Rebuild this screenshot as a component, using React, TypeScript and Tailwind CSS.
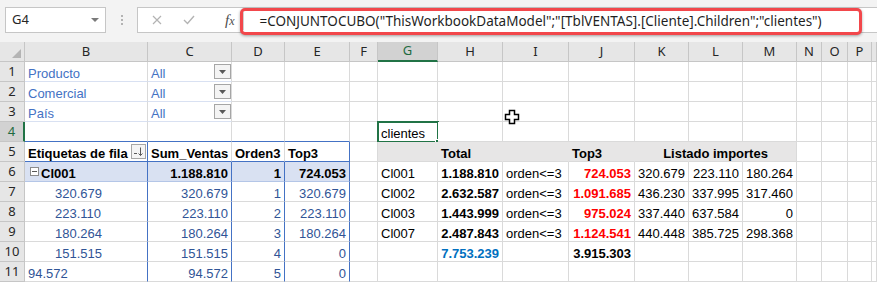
import React from 'react'

const COLS = ['B', 'C', 'D', 'E', 'F', 'G', 'H', 'I', 'J', 'K', 'L', 'M', 'N', 'O', 'P', 'Q']
const ROWS = [1, 2, 3, 4, 5, 6, 7, 8, 9, 10, 11]

const FILTER = 'pl-[3px] text-[#4472c4]'
const HEAD = 'pl-[3px] font-bold'
const NUM = 'justify-end pr-[3px]'
const NUMB = 'justify-end pr-[3px] font-bold'
const PVAL = 'justify-end pr-[3px] text-[#305496]'
const RED = 'justify-end pr-[3px] font-bold text-[#ff0000]'
const TXT = 'pl-[3px]'

type Cell = { v?: React.ReactNode; cls?: string }

function DropBtn() {
  return (
    <span className="ml-auto mb-[1px] flex h-[15px] w-[17px] items-center justify-center border border-[#a6a6a6] bg-[#f4f4f4]">
      <svg width="7" height="4" viewBox="0 0 7 4"><path d="M0 0h7L3.5 4z" fill="#595959" /></svg>
    </span>
  )
}

function SortBtn() {
  return (
    <span className="ml-auto mb-[1px] mr-[1px] flex h-[15px] w-[15px] items-center justify-center border border-[#a6a6a6] bg-[#f4f4f4]">
      <svg width="11" height="11" viewBox="0 0 11 11" fill="none" stroke="#595959" strokeWidth="1">
        <path d="M1 7.5h3" />
        <path d="M7.5 1.5v8M5.5 7.5l2 2 2-2" />
      </svg>
    </span>
  )
}

const DATA: Record<string, Cell> = {
  B1: { v: 'Producto', cls: FILTER },
  C1: { v: <><span>All</span><DropBtn /></>, cls: FILTER },
  B2: { v: 'Comercial', cls: FILTER },
  C2: { v: <><span>All</span><DropBtn /></>, cls: FILTER },
  B3: { v: 'País', cls: FILTER },
  C3: { v: <><span>All</span><DropBtn /></>, cls: FILTER },
  G4: { v: 'clientes', cls: TXT },
  B5: { v: <><span>Etiquetas de fila</span><SortBtn /></>, cls: HEAD },
  C5: { v: 'Sum_Ventas', cls: HEAD },
  D5: { v: 'Orden3', cls: HEAD },
  E5: { v: 'Top3', cls: HEAD },
  H5: { v: 'Total', cls: HEAD },
  J5: { v: 'Top3', cls: HEAD },
  L5: { v: 'Listado importes', cls: 'z-10 justify-center font-bold' },
  B6: {
    v: (
      <>
        <span className="mb-[4px] mr-[2px] flex h-[9px] w-[9px] items-center justify-center border border-[#8c8c8c] bg-white">
          <span className="h-px w-[5px] bg-[#595959]" />
        </span>
        <span>Cl001</span>
      </>
    ),
    cls: 'pl-[5px] font-bold',
  },
  C6: { v: '1.188.810', cls: NUMB },
  D6: { v: '1', cls: NUMB },
  E6: { v: '724.053', cls: NUMB },
  B7: { v: '320.679', cls: 'pl-[30px] text-[#305496]' },
  C7: { v: '320.679', cls: PVAL },
  D7: { v: '1', cls: PVAL },
  E7: { v: '320.679', cls: PVAL },
  B8: { v: '223.110', cls: 'pl-[30px] text-[#305496]' },
  C8: { v: '223.110', cls: PVAL },
  D8: { v: '2', cls: PVAL },
  E8: { v: '223.110', cls: PVAL },
  B9: { v: '180.264', cls: 'pl-[30px] text-[#305496]' },
  C9: { v: '180.264', cls: PVAL },
  D9: { v: '3', cls: PVAL },
  E9: { v: '180.264', cls: PVAL },
  B10: { v: '151.515', cls: 'pl-[30px] text-[#305496]' },
  C10: { v: '151.515', cls: PVAL },
  D10: { v: '4', cls: PVAL },
  E10: { v: '0', cls: PVAL },
  B11: { v: '94.572', cls: 'pl-[3px] text-[#305496]' },
  C11: { v: '94.572', cls: PVAL },
  D11: { v: '5', cls: PVAL },
  E11: { v: '0', cls: PVAL },
  G6: { v: 'Cl001', cls: TXT },
  H6: { v: '1.188.810', cls: NUMB },
  I6: { v: 'orden<=3', cls: TXT },
  J6: { v: '724.053', cls: RED },
  K6: { v: '320.679', cls: NUM },
  L6: { v: '223.110', cls: NUM },
  M6: { v: '180.264', cls: NUM },
  G7: { v: 'Cl002', cls: TXT },
  H7: { v: '2.632.587', cls: NUMB },
  I7: { v: 'orden<=3', cls: TXT },
  J7: { v: '1.091.685', cls: RED },
  K7: { v: '436.230', cls: NUM },
  L7: { v: '337.995', cls: NUM },
  M7: { v: '317.460', cls: NUM },
  G8: { v: 'Cl003', cls: TXT },
  H8: { v: '1.443.999', cls: NUMB },
  I8: { v: 'orden<=3', cls: TXT },
  J8: { v: '975.024', cls: RED },
  K8: { v: '337.440', cls: NUM },
  L8: { v: '637.584', cls: NUM },
  M8: { v: '0', cls: NUM },
  G9: { v: 'Cl007', cls: TXT },
  H9: { v: '2.487.843', cls: NUMB },
  I9: { v: 'orden<=3', cls: TXT },
  J9: { v: '1.124.541', cls: RED },
  K9: { v: '440.448', cls: NUM },
  L9: { v: '385.725', cls: NUM },
  M9: { v: '298.368', cls: NUM },
  H10: { v: '7.753.239', cls: 'justify-end pr-[3px] font-bold text-[#0070c0]' },
  J10: { v: '3.915.303', cls: NUMB },
}

// border / fill overrides for the pivot table and the cube formula block
const RIGHT: Record<string, string> = {}
const BOTTOM: Record<string, string> = {}
const BG: Record<string, string> = {}
for (const r of ROWS) {
  if (r >= 5) {
    RIGHT['B' + r] = 'border-r-[#4472c4]'
    RIGHT['E' + r] = 'border-r-[#4472c4]'
  }
  if (r >= 6) {
    RIGHT['C' + r] = 'border-r-[#4472c4]'
    RIGHT['D' + r] = 'border-r-[#4472c4]'
  }
}
for (const c of ['B', 'C', 'D', 'E']) {
  BOTTOM[c + 4] = 'border-b-[#4472c4]'
  BOTTOM[c + 5] = 'border-b-[#4472c4]'
  BOTTOM[c + 6] = 'border-b-[#b4c6e7]'
  BG[c + 6] = 'bg-[#d9e1f2]'
}
for (const c of ['B', 'C']) for (const r of [1, 2, 3]) BOTTOM[c + r] = 'border-b-[#d9e1f2]'
for (const c of ['G', 'H', 'I', 'J', 'K', 'L', 'M']) {
  BG[c + 5] = 'bg-[#e7e6e6]'
  if (c !== 'M') RIGHT[c + 5] = 'border-r-[#e7e6e6]'
}

function GridCell({ r, c }: { r: number; c: string }) {
  const id = c + r
  const d = DATA[id]
  const right = RIGHT[id] ?? 'border-r-[#dadada]'
  const bottom = BOTTOM[id] ?? 'border-b-[#dadada]'
  const bg = BG[id] ?? 'bg-white'
  return (
    <div className={`relative flex items-end whitespace-nowrap border-r border-b pb-[1px] leading-none ${right} ${bottom} ${bg} ${d?.cls ?? ''}`}>
      {d?.v}
      {id === 'G4' && (
        <div className="absolute -left-[1px] -top-[1px] h-[22px] w-[62px] border-2 border-[#217346]">
          <div className="absolute -bottom-[4px] -right-[4px] h-[6px] w-[6px] border border-white bg-[#217346]" />
        </div>
      )}
    </div>
  )
}

export default function App() {
  return (
    <div className="relative h-[283px] w-[877px] overflow-hidden bg-white font-['Liberation_Sans',Arial,sans-serif] text-[13px] text-black">
      {/* formula bar */}
      <div className="flex h-[42px] items-start bg-[#f3f3f3] font-['Noto_Sans',sans-serif]">
        <div className="ml-[5px] mt-[7px] flex h-[26px] w-[101px] items-center justify-between border border-[#c6c6c6] bg-white pl-[6px] pr-[6px] text-[13px] text-[#262626]">
          <span>G4</span>
          <svg width="8" height="4" viewBox="0 0 8 4"><path d="M0 0h8L4 4z" fill="#7a7a7a" /></svg>
        </div>
        <div className="ml-[15px] mt-[15px] flex flex-col gap-[2px]">
          <span className="h-[2px] w-[2px] bg-[#b3b3b3]" />
          <span className="h-[2px] w-[2px] bg-[#b3b3b3]" />
          <span className="h-[2px] w-[2px] bg-[#b3b3b3]" />
        </div>
        <div className="ml-[14px] mt-[7px] flex h-[26px] flex-1 items-center border border-[#c6c6c6] border-r-0 bg-white">
          <svg className="ml-[14px]" width="10" height="10" viewBox="0 0 10 10" stroke="#b3b3b3" strokeWidth="1.2"><path d="M1 1l8 8M9 1l-8 8" /></svg>
          <svg className="ml-[21px]" width="12" height="10" viewBox="0 0 12 10" fill="none" stroke="#b3b3b3" strokeWidth="1.4"><path d="M1 5l3.5 3.5L11 1" /></svg>
          <span className="ml-[30px] font-['Liberation_Serif',serif] text-[15px] italic leading-none text-[#4d4d4d]">
            f<span className="text-[12px]">x</span>
          </span>
          <div className="ml-[5px] -mt-[1px] -mb-[3px] flex h-[27px] w-[622px] items-center rounded-[5px] border-[3px] border-[#f2474b] bg-white shadow-[0_1px_3px_rgba(0,0,0,0.35)]">
            <span className="h-[18px] w-px bg-[#d0d0d0]" />
            <span className="ml-[16px] whitespace-nowrap text-[13.5px] text-[#1f1f1f]">
              =CONJUNTOCUBO("ThisWorkbookDataModel";"[TblVENTAS].[Cliente].Children";"clientes")
            </span>
          </div>
        </div>
      </div>

      {/* sheet */}
      <div className="grid grid-cols-[25px_123px_84px_53px_65px_28px_60px_65px_66px_66px_54px_54px_54px_25px_26px_24px_1fr] grid-rows-[20px_repeat(11,20px)]">
        <div className="relative border-r border-b border-r-[#c6c6c6] border-b-[#c6c6c6] bg-[#e6e6e6]">
          <svg className="absolute bottom-[3px] right-[3px]" width="9" height="9" viewBox="0 0 9 9"><path d="M9 0v9H0z" fill="#b4b4b4" /></svg>
        </div>
        {COLS.map((c) =>
          c === 'G' ? (
            <div key={c} className="flex items-center justify-center border-r border-b-2 border-r-[#c6c6c6] border-b-[#217346] bg-[#d2d2d2] font-['Noto_Sans',sans-serif] text-[13px] text-[#1e6b41]">
              {c}
            </div>
          ) : (
            <div key={c} className="flex items-center justify-center border-r border-b border-r-[#c6c6c6] border-b-[#c6c6c6] bg-[#e6e6e6] font-['Noto_Sans',sans-serif] text-[13px] text-[#262626]">
              {c === 'Q' ? '' : c}
            </div>
          ),
        )}
        {ROWS.map((r) => (
          <React.Fragment key={r}>
            {r === 4 ? (
              <div className="flex items-center justify-center border-r-2 border-b border-r-[#217346] border-b-[#c6c6c6] bg-[#d2d2d2] font-['Noto_Sans',sans-serif] text-[13px] text-[#1e6b41]">
                {r}
              </div>
            ) : (
              <div className="flex items-center justify-center border-r border-b border-r-[#c6c6c6] border-b-[#c6c6c6] bg-[#e6e6e6] font-['Noto_Sans',sans-serif] text-[13px] text-[#262626]">
                {r}
              </div>
            )}
            {COLS.map((c) => (
              <GridCell key={c} r={r} c={c} />
            ))}
          </React.Fragment>
        ))}
      </div>

      {/* mouse cursor */}
      <svg className="absolute left-[504px] top-[109px]" width="16" height="16" viewBox="0 0 16 16">
        <path d="M5.5 1.5h5v4h4v5h-4v4h-5v-4h-4v-5h4z" fill="#fff" stroke="#000" strokeWidth="1.5" />
      </svg>
    </div>
  )
}
